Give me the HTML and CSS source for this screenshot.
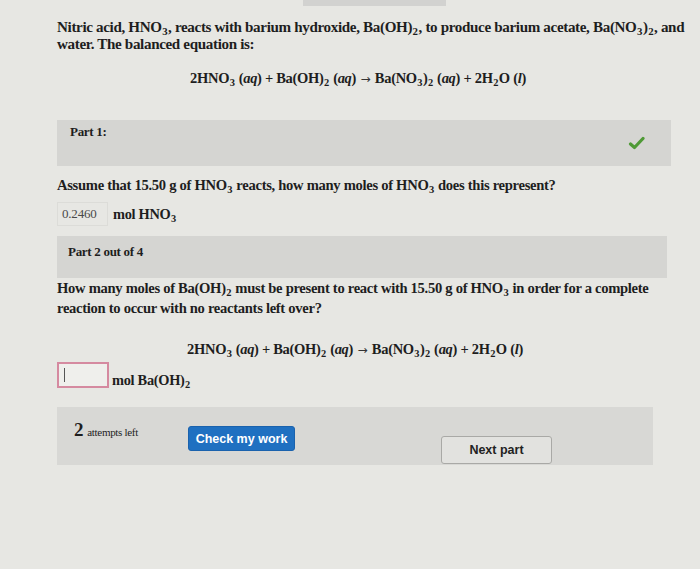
FILE: index.html
```html
<!DOCTYPE html>
<html>
<head>
<meta charset="utf-8">
<link rel="stylesheet" href="styles.css">
</head>
<body>
<div class="topbar"></div>
<main class="page">
  <p class="intro">Nitric acid, HNO<sub>3</sub>, reacts with barium hydroxide, Ba(OH)<sub>2</sub>, to produce barium acetate, Ba(NO<sub>3</sub>)<sub>2</sub>, and water. The balanced equation is:</p>
  <p class="eq eq1">2HNO<sub>3</sub> (<i>aq</i>) + Ba(OH)<sub>2</sub> (<i>aq</i>) <span class="arrow">&rarr;</span> Ba(NO<sub>3</sub>)<sub>2</sub> (<i>aq</i>) + 2H<sub>2</sub>O (<i>l</i>)</p>

  <div class="partbar part1">
    <span class="partlabel">Part 1:</span>
    <svg class="check" width="17" height="14" viewBox="0 0 17 14"><path d="M2.5 8 L6.5 11.5 L15 2.5" fill="none" stroke="#4f9a36" stroke-width="3.2" stroke-linecap="round" stroke-linejoin="round"/></svg>
  </div>

  <p class="question q1">Assume that 15.50 g of HNO<sub>3</sub> reacts, how many moles of HNO<sub>3</sub> does this represent?</p>
  <div class="answer a1">
    <span class="ansbox done">0.2460</span>
    <span class="unit">mol HNO<sub>3</sub></span>
  </div>

  <div class="partbar part2">
    <span class="partlabel">Part 2 out of 4</span>
  </div>

  <p class="question q2">How many moles of Ba(OH)<sub>2</sub> must be present to react with 15.50 g of HNO<sub>3</sub> in order for a complete reaction to occur with no reactants left over?</p>
  <p class="eq eq2">2HNO<sub>3</sub> (<i>aq</i>) + Ba(OH)<sub>2</sub> (<i>aq</i>) <span class="arrow">&rarr;</span> Ba(NO<sub>3</sub>)<sub>2</sub> (<i>aq</i>) + 2H<sub>2</sub>O (<i>l</i>)</p>
  <div class="answer a2">
    <span class="ansbox empty"><span class="caret"></span></span>
    <span class="unit">mol Ba(OH)<sub>2</sub></span>
  </div>

  <div class="actionbar">
    <div class="attempts"><span class="num">2</span> attempts left</div>
    <button class="btn primary">Check my work</button>
    <button class="btn secondary">Next part</button>
  </div>
</main>
</body>
</html>
```

FILE: styles.css
```css
html, body {
  margin: 0;
  padding: 0;
}
body {
  background: #e7e7e3;
  width: 700px;
  height: 569px;
  overflow: hidden;
  font-family: "Liberation Serif", "Times New Roman", serif;
  color: #1e1e1e;
  position: relative;
}
.topbar {
  position: absolute;
  left: 303px;
  top: 0;
  width: 143px;
  height: 6px;
  background: #d2d2d0;
}
.page {
  padding: 19px 0 0 57px;
  width: 630px;
}
p { margin: 0; }
sub {
  font-size: 0.72em;
  vertical-align: -0.3em;
  line-height: 0;
  letter-spacing: 0;
  padding: 0 0.5px 0 0.5px;
}
.intro {
  font-weight: bold;
  font-size: 15.1px;
  line-height: 17px;
  letter-spacing: -0.35px;
}
.eq {
  font-weight: bold;
  font-size: 14.5px;
  line-height: 18px;
  letter-spacing: -0.3px;
  text-align: center;
}
.eq .arrow {
  font-family: "DejaVu Sans", sans-serif;
  font-weight: normal;
  font-size: 12px;
  letter-spacing: 0;
  color: #333;
  margin: 0 1px;
}
.eq1 {
  margin-top: 16px;
  width: 602px;
}
.partbar {
  background: #d5d5d2;
  display: flex;
  align-items: flex-start;
  justify-content: space-between;
  box-sizing: border-box;
}
.part1 {
  margin-top: 32px;
  width: 614px;
  height: 46px;
  padding: 4px 26px 0 13px;
}
.partlabel {
  font-weight: bold;
  font-size: 13px;
  line-height: 15px;
  letter-spacing: -0.3px;
}
.check { margin-top: 12px; }
.question {
  font-weight: bold;
  font-size: 14.6px;
  line-height: 20px;
  letter-spacing: -0.3px;
}
.q1 { margin-top: 9px; }
.answer {
  display: flex;
  align-items: center;
  gap: 5px;
}
.a1 { margin-top: 7px; }
.ansbox {
  box-sizing: border-box;
  display: inline-flex;
  align-items: center;
  height: 24px;
  font-size: 13px;
}
.ansbox.done {
  width: 51px;
  border: 1px solid #dcdcd8;
  padding-left: 4px;
  color: #4a4a4a;
  letter-spacing: -0.2px;
}
.ansbox.empty {
  width: 52px;
  height: 26px;
  border: 2px solid #d58aa0;
  background: #efefec;
  padding-left: 5px;
}
.caret {
  width: 1px;
  height: 14px;
  background: #555;
}
.unit {
  font-weight: bold;
  font-size: 14.4px;
  letter-spacing: -0.3px;
}
.part2 {
  margin-top: 10px;
  width: 610px;
  height: 42px;
  padding: 8px 0 0 11px;
}
.q2 { margin-top: 0; width: 612px; }
.eq2 { margin-top: 22px; width: 596px; }
.a2 { margin-top: 3px; gap: 3px; align-items: flex-end; }
.a2 .unit { margin-bottom: -1px; }
.actionbar {
  margin-top: 19px;
  width: 596px;
  height: 58px;
  background: #d8d8d5;
  display: flex;
  align-items: flex-start;
  box-sizing: border-box;
  padding: 0 0 0 17px;
}
.attempts {
  font-size: 11px;
  letter-spacing: -0.3px;
  display: flex;
  align-items: baseline;
  gap: 4px;
  margin-top: 12px;
}
.attempts .num {
  font-size: 19px;
  font-weight: bold;
}
.btn {
  font-family: "Liberation Sans", Arial, sans-serif;
  font-weight: bold;
  font-size: 12.5px;
  border-radius: 3px;
  box-sizing: border-box;
  white-space: nowrap;
  padding: 0;
}
.primary {
  margin-left: 50px;
  margin-top: 19px;
  width: 107px;
  height: 25px;
  background: #1f70c1;
  color: #fff;
  border: 1px solid #1a62ad;
}
.secondary {
  margin-left: 146px;
  margin-top: 29px;
  width: 111px;
  height: 28px;
  background: #e2e2df;
  color: #222;
  border: 1px solid #a9a9a6;
}
```
